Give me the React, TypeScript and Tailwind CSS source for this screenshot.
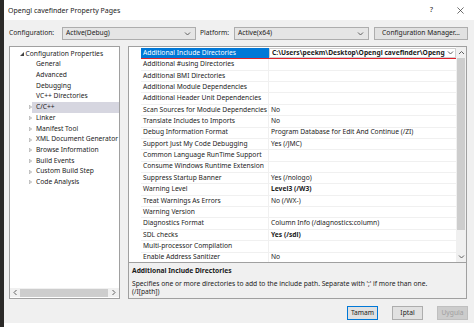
import React from "react";

const tree = [
  { label: "General", arrow: false },
  { label: "Advanced", arrow: false },
  { label: "Debugging", arrow: false },
  { label: "VC++ Directories", arrow: false },
  { label: "C/C++", arrow: true, active: true },
  { label: "Linker", arrow: true },
  { label: "Manifest Tool", arrow: true },
  { label: "XML Document Generator", arrow: true },
  { label: "Browse Information", arrow: true },
  { label: "Build Events", arrow: true },
  { label: "Custom Build Step", arrow: true },
  { label: "Code Analysis", arrow: true },
];

const props: { name: string; value?: string; bold?: boolean }[] = [
  { name: "Additional #using Directories" },
  { name: "Additional BMI Directories" },
  { name: "Additional Module Dependencies" },
  { name: "Additional Header Unit Dependencies" },
  { name: "Scan Sources for Module Dependencies", value: "No" },
  { name: "Translate Includes to Imports", value: "No" },
  { name: "Debug Information Format", value: "Program Database for Edit And Continue (/ZI)" },
  { name: "Support Just My Code Debugging", value: "Yes (/JMC)" },
  { name: "Common Language RunTime Support" },
  { name: "Consume Windows Runtime Extension" },
  { name: "Suppress Startup Banner", value: "Yes (/nologo)" },
  { name: "Warning Level", value: "Level3 (/W3)", bold: true },
  { name: "Treat Warnings As Errors", value: "No (/WX-)" },
  { name: "Warning Version" },
  { name: "Diagnostics Format", value: "Column Info (/diagnostics:column)" },
  { name: "SDL checks", value: "Yes (/sdl)", bold: true },
  { name: "Multi-processor Compilation" },
  { name: "Enable Address Sanitizer", value: "No" },
];

const Chevron = ({ dir = "down" }: { dir?: "down" | "up" | "left" | "right" }) => {
  const d = {
    down: "M1 1.5 L3.5 4 L6 1.5",
    up: "M1 4 L3.5 1.5 L6 4",
    left: "M4.5 1 L2 3.5 L4.5 6",
    right: "M2.5 1 L5 3.5 L2.5 6",
  }[dir];
  const box = dir === "down" || dir === "up" ? "0 0 7 5.5" : "0 0 7 7";
  return (
    <svg viewBox={box} className={dir === "down" || dir === "up" ? "w-[7px] h-[5.5px]" : "w-[7px] h-[7px]"}>
      <path d={d} fill="none" stroke="#606060" strokeWidth="1" />
    </svg>
  );
};

const Combo = ({ text, className }: { text: string; className: string }) => (
  <div className={`flex items-center justify-between h-[13px] bg-[#e5e5e5] border border-[#adadad] pl-[3px] pr-[4px] ${className}`}>
    <span>{text}</span>
    <Chevron />
  </div>
);

export default function App() {
  return (
    <div className="w-[474px] h-[327px] flex overflow-hidden font-['Noto_Sans',sans-serif] text-[6.7px] leading-none text-[#1b1b1b]">
      <div className="w-[4px] bg-[#2b2a28]" />
      <div className="flex-1 flex flex-col bg-[#f0f0f0]">
        {/* title bar */}
        <div className="h-[20px] bg-white flex items-center pl-[4px] pr-[10px]">
          <span className="flex-1 text-[7px]">Opengl cavefinder Property Pages</span>
          <span className="text-[7.5px] mr-[24px]">?</span>
          <svg viewBox="0 0 8 8" className="w-[7px] h-[7px]">
            <path d="M0.5 0.5 L7.5 7.5 M7.5 0.5 L0.5 7.5" stroke="#333" strokeWidth="0.8" />
          </svg>
        </div>

        {/* configuration row */}
        <div className="flex items-center mt-[7px] pl-[5px] pr-[3px] h-[13px]">
          <span className="w-[53px]">Configuration:</span>
          <Combo text="Active(Debug)" className="w-[134px]" />
          <span className="ml-[4px] w-[34px]">Platform:</span>
          <Combo text="Active(x64)" className="w-[135px]" />
          <button className="ml-[5px] h-[13px] w-[94px] bg-[#e1e1e1] border border-[#adadad]">
            Configuration Manager...
          </button>
        </div>

        {/* panels */}
        <div className="flex mt-[6px] h-[253px] pl-[5px] pr-[7px] gap-[8px]">
          {/* tree */}
          <div className="w-[111px] bg-white border border-[#a0a0a0] flex flex-col">
            <div className="flex-1 pt-[1.5px] whitespace-nowrap overflow-hidden">
              <div className="h-[10.72px] flex items-center">
                <svg viewBox="0 0 4 4" className="ml-[10px] w-[4px] h-[4px]">
                  <path d="M4 0 L4 4 L0 4 Z" fill="#444" />
                </svg>
                <span className="ml-[1.5px]">Configuration Properties</span>
              </div>
              {tree.map((t) => (
                <div
                  key={t.label}
                  className={`h-[10.72px] flex items-center ml-[22px] ${t.active ? "bg-[#d6d6e0]" : ""}`}
                >
                  <span className="w-[4px] ml-[-3px] flex">
                    {t.arrow && (
                      <svg viewBox="0 0 4 5" className="w-[3px] h-[4px]">
                        <path d="M0.4 0.4 L3.5 2.5 L0.4 4.6 Z" fill="none" stroke="#666" strokeWidth="0.6" />
                      </svg>
                    )}
                  </span>
                  <span className="ml-[3px]">{t.label}</span>
                </div>
              ))}
            </div>
            <div className="h-[9px] mb-[1px] flex items-center bg-[#f0f0f0]">
              <span className="w-[10px] flex justify-center"><Chevron dir="left" /></span>
              <div className="flex-1 h-[8px] bg-[#cdcdcd]" />
              <span className="w-[11px] flex justify-center"><Chevron dir="right" /></span>
            </div>
          </div>

          {/* right side */}
          <div className="flex-1 flex flex-col">
            <div className="h-[217px] bg-white border border-[#a0a0a0] flex">
              <div className="flex-1 pt-[1px] overflow-hidden">
                {/* selected row */}
                <div className="flex h-[11.4px]">
                  <div className="w-[12px]" />
                  <div className="flex-1 flex border-b-[1.5px] border-[#e0202a]">
                    <div className="w-[128px] bg-[#0078d7] text-white flex items-center pl-[2px] whitespace-nowrap">
                      Additional Include Directories
                    </div>
                    <div className="flex-1 flex items-center justify-between pl-[2px] pr-[1px] font-bold border border-[#cfcfcf]">
                      <span className="whitespace-nowrap overflow-hidden">C:\Users\peekm\Desktop\Opengl cavefinder\Openg</span>
                      <Chevron />
                    </div>
                  </div>
                </div>
                {props.map((p) => (
                  <div key={p.name} className="flex h-[11.37px]">
                    <div className="w-[12px]" />
                    <div className="flex-1 flex border-b border-[#f0f0f0]">
                      <div className="w-[128px] flex items-center pl-[2px] whitespace-nowrap overflow-hidden border-r border-[#f0f0f0]">
                        {p.name}
                      </div>
                      <div className={`flex-1 flex items-center pl-[2px] whitespace-nowrap ${p.bold ? "font-bold" : ""}`}>
                        {p.value}
                      </div>
                    </div>
                  </div>
                ))}
              </div>
              {/* vertical scrollbar */}
              <div className="w-[10px] bg-[#f0f0f0] flex flex-col items-center">
                <div className="h-[11px] flex items-center"><Chevron dir="up" /></div>
                <div className="w-[8px] h-[172px] bg-[#cdcdcd]" />
                <div className="flex-1" />
                <div className="h-[11px] flex items-center"><Chevron dir="down" /></div>
              </div>
            </div>
            <div className="flex-1 border border-[#a0a0a0] border-t-0 bg-[#f0f0f0] pl-[3px] pt-[4.5px]">
              <div className="font-bold">Additional Include Directories</div>
              <div className="mt-[5.5px] leading-[8.3px]">
                Specifies one or more directories to add to the include path. Separate with ';' if more than one.
                <br />
                (/I[path])
              </div>
            </div>
          </div>
        </div>

        {/* buttons */}
        <div className="flex justify-end gap-[14px] mt-[7px] h-[14px] pr-[6px]">
          <button className="w-[31px] bg-[#e1e1e1] border-[1.5px] border-[#0078d7]">Tamam</button>
          <button className="w-[31px] bg-[#e1e1e1] border border-[#adadad]">Iptal</button>
          <button className="w-[31px] bg-[#cccccc] border border-[#bfbfbf] text-[#a0a0a0]">Uygula</button>
        </div>
        <div className="flex-1" />
        <div className="h-[4px] bg-white" />
      </div>
    </div>
  );
}
